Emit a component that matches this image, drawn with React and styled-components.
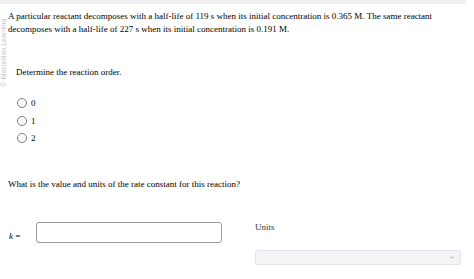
import React from 'react';
import styled, { createGlobalStyle } from 'styled-components';

const GlobalStyle = createGlobalStyle`
  html, body {
    margin: 0;
    padding: 0;
    background: #ffffff;
  }
  body {
    font-family: "Liberation Serif", "Times New Roman", serif;
    color: #000;
  }
`;

const Page = styled.div`
  position: relative;
  width: 474px;
  height: 279px;
  overflow: hidden;
  background: #fff;
`;

const TopStrip = styled.div`
  width: 466px;
  height: 4px;
  background: #eeeef0;
`;

const Watermark = styled.div`
  position: absolute;
  left: 0;
  top: 10px;
  width: 7px;
  height: 84px;
  display: flex;
  align-items: center;
  justify-content: center;
  overflow: hidden;

  span {
    transform: rotate(-90deg);
    white-space: nowrap;
    font-family: "Liberation Sans", Arial, sans-serif;
    font-size: 7px;
    color: #c4c4c8;
  }
`;

const Content = styled.div`
  padding: 6px 0 0 8px;
`;

const Paragraph = styled.p`
  margin: 0;
  font-size: 9px;
  line-height: 13px;
  width: 440px;
`;

const SubQuestion = styled.p`
  margin: 30px 0 0 8px;
  font-size: 9px;
  line-height: 13px;
`;

const OptionList = styled.div`
  margin: 18px 0 0 9px;
  display: flex;
  flex-direction: column;
  gap: 5px;
`;

const Option = styled.label`
  display: flex;
  align-items: center;
  gap: 4px;
  height: 12.5px;
  font-size: 9px;
`;

const Radio = styled.span`
  width: 10px;
  height: 10px;
  border-radius: 50%;
  border: 1px solid #7a7a7a;
  background: #fff;
  box-sizing: border-box;
`;

const Question = styled.p`
  margin: 33px 0 0 0;
  font-size: 9px;
  line-height: 13px;
`;

const AnswerRow = styled.div`
  margin-top: 30px;
  display: flex;
  align-items: flex-start;
`;

const ValueGroup = styled.div`
  display: flex;
  align-items: flex-start;
  padding-top: 1px;
  gap: 8px;
`;

const KLabel = styled.span`
  font-size: 9px;
  line-height: 13px;
  width: 19px;
  padding-left: 1px;
  padding-top: 8px;
  i {
    font-style: italic;
  }
`;

const ValueInput = styled.div`
  width: 186px;
  height: 21px;
  box-sizing: border-box;
  border: 1px solid #9a9a9a;
  border-radius: 3px;
  background: #fff;
`;

const UnitsGroup = styled.div`
  margin-left: 33px;
  display: flex;
  flex-direction: column;
  gap: 16px;
`;

const UnitsLabel = styled.span`
  font-size: 9px;
  line-height: 13px;
  color: #333;
`;

const Select = styled.div`
  width: 206px;
  height: 15px;
  box-sizing: border-box;
  border: 1px solid #e3e3e8;
  border-radius: 2px;
  background: #f4f4f7;
  display: flex;
  align-items: center;
  justify-content: flex-end;
  padding-right: 6px;
`;

const App = () => {
  return (
    <Page>
      <GlobalStyle />
      <TopStrip />
      <Watermark>
        <span>© Macmillan Learning</span>
      </Watermark>
      <Content>
        <Paragraph>
          A particular reactant decomposes with a half-life of 119 s when its initial concentration is 0.365 M. The same reactant decomposes with a half-life of 227 s when its initial concentration is 0.191 M.
        </Paragraph>
        <SubQuestion>Determine the reaction order.</SubQuestion>
        <OptionList>
          {['0', '1', '2'].map((o) => (
            <Option key={o}>
              <Radio />
              {o}
            </Option>
          ))}
        </OptionList>
        <Question>What is the value and units of the rate constant for this reaction?</Question>
        <AnswerRow>
          <ValueGroup>
            <KLabel>
              <i>k</i> =
            </KLabel>
            <ValueInput />
          </ValueGroup>
          <UnitsGroup>
            <UnitsLabel>Units</UnitsLabel>
            <Select>
              <svg width="4" height="3" viewBox="0 0 4 3">
                <path d="M0.5 0.5 L2 2.2 L3.5 0.5" fill="none" stroke="#999" strokeWidth="0.8" />
              </svg>
            </Select>
          </UnitsGroup>
        </AnswerRow>
      </Content>
    </Page>
  );
};

export default App;
